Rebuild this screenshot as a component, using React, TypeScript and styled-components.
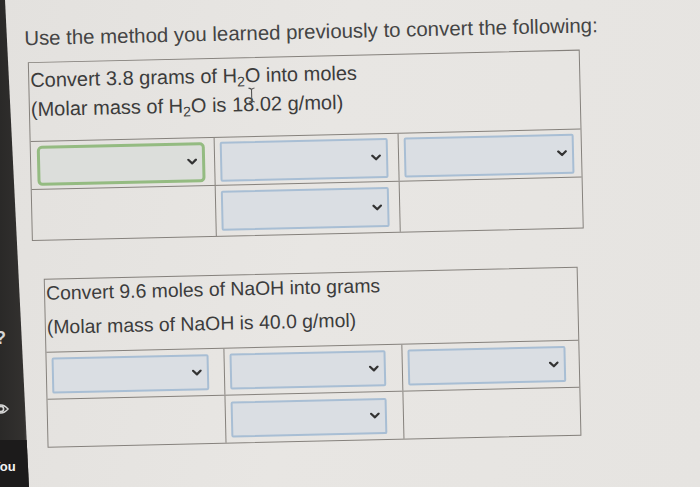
import React from 'react';
import styled, { createGlobalStyle } from 'styled-components';

const Global = createGlobalStyle`
  html, body {
    margin: 0;
    padding: 0;
    width: 700px;
    height: 487px;
    overflow: hidden;
    background: #e6e4e1;
  }
  #root { height: 487px; }
`;

const Page = styled.div`
  display: grid;
  grid-template-columns: 700px;
  grid-template-rows: 487px;
  overflow: hidden;
  background: linear-gradient(100deg, #e3e1de 0%, #e8e6e3 45%, #e6e4e1 100%);
  font-family: "Liberation Sans", Arial, sans-serif;
  color: #3f3f3f;
  > * { grid-area: 1 / 1; }
`;

const Side = styled.aside`
  width: 30px;
  height: 487px;
  justify-self: start;
  z-index: 2;
  display: flex;
  flex-direction: column;
  justify-content: flex-end;
  overflow: hidden;
  background: linear-gradient(90deg, #2a2928 0%, #33312f 80%, #5a5856 100%);
  clip-path: polygon(0 0, 5px 0, 29px 100%, 0 100%);
  color: #d6d6d6;
`;

const Help = styled.span`
  margin: 0 0 56px -5px;
  font-size: 18px;
  line-height: 16px;
  font-weight: 700;
`;

const Eye = styled.svg`
  margin: 0 0 24px -7px;
  display: block;
`;

const SideFoot = styled.div`
  height: 47px;
  background: #1c1b1b;
  padding-top: 19px;
  box-sizing: border-box;
  font-size: 13px;
  font-weight: 700;
  color: #f2f2f2;
  line-height: 16px;
  white-space: nowrap;
  span { margin-left: -8px; }
`;

const Main = styled.main`
  padding: 20px 0 0 29px;
  display: flex;
  flex-direction: column;
  align-items: flex-start;
  transform: rotate(-1.3deg);
  transform-origin: 300px 243px;
`;

const Title = styled.h1`
  margin: 0;
  font-size: 20.4px;
  font-weight: 400;
  line-height: 24px;
  color: #444;
  white-space: nowrap;
`;

const Table = styled.section<{ $ml: number; $w: number; $mt: number }>`
  margin: ${p => p.$mt}px 0 0 ${p => p.$ml}px;
  width: ${p => p.$w}px;
  box-sizing: border-box;
  border: 1px solid #85817c;
`;

const Header = styled.div<{ $pt: number; $gap: number; $pb: number }>`
  position: relative;
  display: flex;
  flex-direction: column;
  gap: ${p => p.$gap}px;
  padding: ${p => p.$pt}px 6px ${p => p.$pb}px 1px;
  border-bottom: 1px solid #85817c;
`;

const Line = styled.div<{ $fs: number }>`
  font-size: ${p => p.$fs}px;
  line-height: 24px;
  color: #3c3c3c;
  white-space: nowrap;
  sub {
    font-size: 0.7em;
    line-height: 0;
    vertical-align: -4px;
  }
`;

const Cursor = styled.svg`
  position: absolute;
  left: 218px;
  top: 29px;
`;

const Row = styled.div<{ $h: number; $last?: boolean }>`
  display: grid;
  grid-template-columns: 1fr 1fr 1fr;
  height: ${p => p.$h}px;
  border-bottom: ${p => (p.$last ? 'none' : '1px solid #85817c')};
`;

const Cell = styled.div<{ $pl: number }>`
  display: flex;
  align-items: center;
  padding-left: ${p => p.$pl}px;
  & + & { border-left: 1px solid #85817c; }
`;

const Select = styled.div<{ $w: number; $h: number; $green?: boolean }>`
  width: ${p => p.$w}px;
  height: ${p => p.$h}px;
  box-sizing: border-box;
  display: flex;
  align-items: center;
  justify-content: flex-end;
  padding-right: 5px;
  background: ${p => (p.$green ? '#dcdedb' : '#dadee3')};
  border: ${p => (p.$green ? '3px solid #94bb81' : '2px solid #a8bed4')};
  border-radius: ${p => (p.$green ? '5px' : '2px')};
`;

const Chevron = () => (
  <svg width="10" height="7" viewBox="0 0 10 7">
    <path d="M1.2 1.3 L5 5 L8.8 1.3" fill="none" stroke="#333" strokeWidth="2.2" strokeLinecap="round" strokeLinejoin="round" />
  </svg>
);

type SelProps = { w: number; h: number; green?: boolean };
const Drop = ({ w, h, green }: SelProps) => (
  <Select $w={w} $h={h} $green={green}>
    <Chevron />
  </Select>
);

export default function App() {
  return (
    <>
      <Global />
      <Page>
        <Side>
          <Help>?</Help>
          <Eye width="16" height="14" viewBox="0 0 16 14">
            <path d="M1 7 Q8 -1 15 7 Q8 15 1 7 Z" fill="none" stroke="#d6d6d6" strokeWidth="1.6" />
            <circle cx="8" cy="7" r="2.6" fill="none" stroke="#d6d6d6" strokeWidth="1.6" />
          </Eye>
          <SideFoot><span>You</span></SideFoot>
        </Side>
        <Main>
          <Title>Use the method you learned previously to convert the following:</Title>

          <Table $mt={12} $ml={3} $w={552}>
            <Header $pt={5} $gap={5} $pb={20}>
              <Line $fs={20}>Convert 3.8 grams of H<sub>2</sub>O into moles</Line>
              <Line $fs={20}>(Molar mass of H<sub>2</sub>O is 18.02 g/mol)</Line>
              <Cursor width="8" height="16" viewBox="0 0 8 16">
                <path d="M1 1 Q4 1.5 4 3 Q4 1.5 7 1 M4 3 V13 M1 15 Q4 14.5 4 13 Q4 14.5 7 15" fill="none" stroke="#555" strokeWidth="1.1" />
              </Cursor>
            </Header>
            <Row $h={47}>
              <Cell $pl={6}><Drop w={168} h={40} green /></Cell>
              <Cell $pl={5}><Drop w={168} h={40} /></Cell>
              <Cell $pl={5}><Drop w={170} h={40} /></Cell>
            </Row>
            <Row $h={50} $last>
              <Cell $pl={6} />
              <Cell $pl={5}><Drop w={168} h={40} /></Cell>
              <Cell $pl={5} />
            </Row>
          </Table>

          <Table $mt={38} $ml={14} $w={534}>
            <Header $pt={1} $gap={10} $pb={13}>
              <Line $fs={19.4}>Convert 9.6 moles of NaOH into grams</Line>
              <Line $fs={19.4}>(Molar mass of NaOH is 40.0 g/mol)</Line>
            </Header>
            <Row $h={46}>
              <Cell $pl={5}><Drop w={157} h={36} /></Cell>
              <Cell $pl={5}><Drop w={156} h={36} /></Cell>
              <Cell $pl={5}><Drop w={158} h={36} /></Cell>
            </Row>
            <Row $h={47} $last>
              <Cell $pl={5} />
              <Cell $pl={5}><Drop w={156} h={36} /></Cell>
              <Cell $pl={5} />
            </Row>
          </Table>
        </Main>
      </Page>
    </>
  );
}
